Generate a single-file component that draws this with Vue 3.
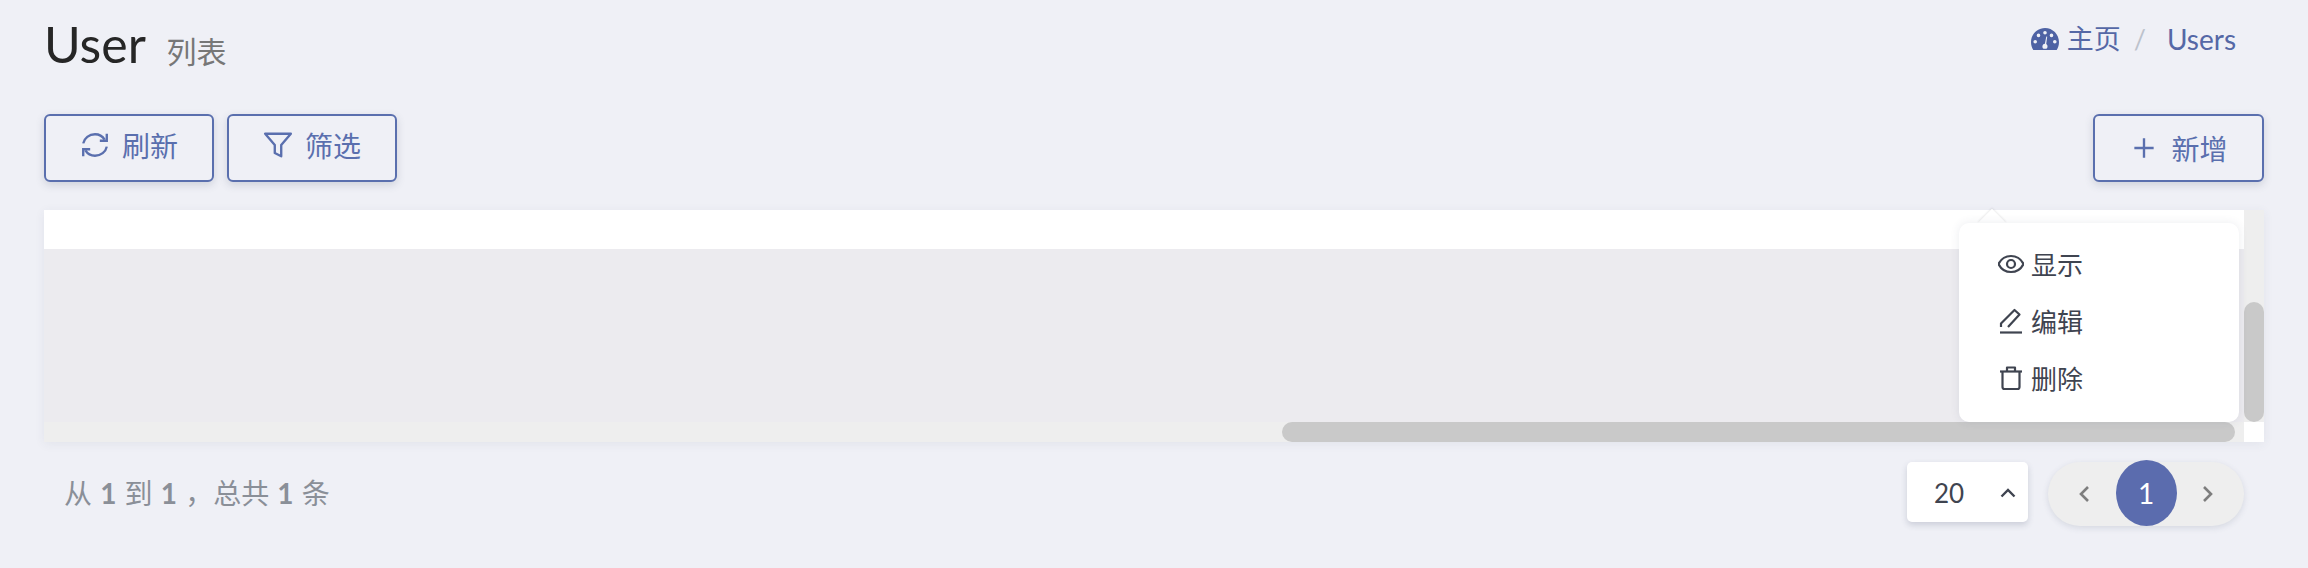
<script setup>
const actions = [
  { label: '显示', icon: 'eye' },
  { label: '编辑', icon: 'edit' },
  { label: '删除', icon: 'trash' }
]
</script>

<template>
  <div class="page">
    <header class="head">
      <h1 class="title">User <small>列表</small></h1>
      <nav class="crumbs">
        <svg class="gauge" viewBox="0 0 28 22" width="28" height="22">
          <path fill-rule="evenodd" d="M14 0C6.3 0 0 6.3 0 14c0 3 .8 5.700 2.300 8h23.400C27.200 19.700 28 17 28 14 28 6.300 21.700 0 14 0zM14 3a1.800 1.800 0 1 1 0 3.600A1.800 1.800 0 0 1 14 3zM7.500 5.600a1.800 1.800 0 1 1 0 3.600 1.800 1.800 0 0 1 0-3.600zM20.500 5.600a1.800 1.800 0 1 1 0 3.600 1.800 1.800 0 0 1 0-3.600zM4.200 12a1.800 1.800 0 1 1 0 3.600 1.800 1.800 0 0 1 0-3.600zM23.800 12a1.800 1.800 0 1 1 0 3.600 1.800 1.800 0 0 1 0-3.600zM15.300 8.500l.9.200-1 7.400c.8.500 1.300 1.300 1.300 2.300 0 1-.5 1.900-1.300 2.400h-2.500c-.8-.5-1.300-1.400-1.300-2.400 0-1.400 1.100-2.600 2.500-2.700z" />
        </svg>
        <span class="crumb-home">主页</span>
        <span class="crumb-sep">/</span>
        <span class="crumb-current">Users</span>
      </nav>
    </header>

    <div class="toolbar">
      <div class="toolbar-left">
        <button class="btn btn-raised">
          <svg viewBox="0 0 28 28" width="30" height="30" fill="none" stroke="currentColor" stroke-width="2.200">
            <path d="M3 12.500C4 7.500 8.500 4 14 4c4 0 7 1.800 9 5" />
            <path d="M25 3.500V10h-6.500" />
            <path d="M25 15.500C24 20.500 19.500 24 14 24c-4 0-7-1.800-9-5" />
            <path d="M3 24.500V18h6.500" />
          </svg>
          <span>刷新</span>
        </button>
        <button class="btn btn-raised">
          <svg viewBox="0 0 28 28" width="30" height="30" fill="none" stroke="currentColor" stroke-width="2.200" stroke-linejoin="round">
            <path d="M2 3.500h24L17 14v10.500l-6-3V14z" />
          </svg>
          <span>筛选</span>
        </button>
      </div>
      <button class="btn btn-add">
        <svg viewBox="0 0 28 28" width="30" height="30" fill="none" stroke="currentColor" stroke-width="2.200">
          <path d="M14 5v18M5 14h18" />
        </svg>
        <span>新增</span>
      </button>
    </div>

    <section class="grid">
      <div class="grid-view">
        <div class="grid-head"></div>
        <div class="grid-body"></div>
      </div>
      <div class="track-v"><div class="thumb-v"></div></div>
      <div class="track-h"><div class="thumb-h"></div></div>
      <div class="corner"></div>

      <div class="arrow"></div>
      <ul class="menu">
        <li v-for="a in actions" :key="a.label" class="menu-item">
          <svg viewBox="0 0 26 26" width="26" height="26" fill="none" stroke="currentColor" stroke-width="2.200" stroke-linejoin="round">
            <template v-if="a.icon === 'eye'">
              <path d="M.5 13C3 8 7.500 5 13 5s10 3 12.500 8C23 18 18.500 21 13 21S3 18 .5 13z" />
              <circle cx="13" cy="13" r="4" />
            </template>
            <template v-else-if="a.icon === 'edit'">
              <path d="M3 19v-3.500L16.500 2l5 4.500L10 19" />
              <path d="M2 24.500h22" />
            </template>
            <template v-else>
              <path d="M2 6.500h22" />
              <path d="M9 6.500V2.500h8v4" />
              <path d="M4.500 6.500V22a2 2 0 0 0 2 2h13a2 2 0 0 0 2-2V6.500" />
            </template>
          </svg>
          <span>{{ a.label }}</span>
        </li>
      </ul>
    </section>

    <footer class="foot">
      <div class="summary">从 <b>1</b> 到 <b>1</b> ，总共 <b>1</b> 条</div>
      <div class="paging">
        <div class="size">
          <span>20</span>
          <svg viewBox="0 0 16 10" width="16" height="10" fill="none" stroke="currentColor" stroke-width="2.400">
            <path d="M1.500 8.500L8 2l6.500 6.500" />
          </svg>
        </div>
        <div class="pager">
          <svg viewBox="0 0 12 18" width="12" height="18" fill="none" stroke="currentColor" stroke-width="2.600">
            <path d="M10 2L3 9l7 7" />
          </svg>
          <span class="page-on">1</span>
          <svg viewBox="0 0 12 18" width="12" height="18" fill="none" stroke="currentColor" stroke-width="2.600">
            <path d="M2 2l7 7-7 7" />
          </svg>
        </div>
      </div>
    </footer>
  </div>
</template>

<style>
html, body {
  margin: 0;
  background: #eff0f6;
}
</style>

<style scoped>
.page {
  width: 2308px;
  height: 568px;
  box-sizing: border-box;
  padding: 0 44px;
  overflow: hidden;
  background: #eff0f6;
  font-family: Lato, "Noto Sans CJK SC", sans-serif;
  color: #3c4250;
}

.head {
  display: flex;
  justify-content: space-between;
  align-items: flex-start;
  height: 114px;
}

.title {
  margin: 14px 0 0;
  font-size: 50px;
  line-height: 60px;
  font-weight: 400;
  color: #262626;
}

.title small {
  margin-left: 9px;
  font-size: 30px;
  color: #777;
}

.crumbs {
  display: flex;
  align-items: center;
  margin: 22px 28px 0 0;
  font-size: 27px;
  line-height: 34px;
  color: #5568a6;
}

.gauge {
  fill: #4e62a4;
  margin-right: 8px;
}

.crumb-sep {
  margin: 0 21px 0 13px;
  color: #bcc2cc;
}

.crumb-current {
  font-size: 28px;
}

.toolbar {
  display: flex;
  justify-content: space-between;
  height: 68px;
}

.toolbar-left {
  display: flex;
  gap: 13px;
}

.btn {
  display: flex;
  align-items: center;
  justify-content: center;
  gap: 12px;
  width: 170px;
  height: 68px;
  padding: 0;
  box-sizing: border-box;
  border: 2px solid #5a6fae;
  border-radius: 6px;
  background: #eff0f6;
  box-shadow: 0 3px 8px rgba(60, 70, 100, 0.18);
  font-family: inherit;
  font-size: 28px;
  color: #5a6fae;
}

.btn-raised {
  padding-bottom: 7px;
}

.btn-add {
  width: 171px;
}

.grid {
  position: relative;
  display: grid;
  grid-template-columns: 2200px 20px;
  grid-template-rows: 212px 20px;
  width: 2220px;
  margin-top: 28px;
  box-shadow: 0 2px 10px rgba(60, 70, 100, 0.07);
}

.grid-view {
  display: flex;
  flex-direction: column;
}

.grid-head {
  height: 39px;
  background: #fff;
}

.grid-body {
  flex: 1;
  background: #ecebef;
}

.track-v {
  display: flex;
  align-items: flex-end;
  background: #eee;
}

.thumb-v {
  width: 20px;
  height: 120px;
  border-radius: 10px;
  background: #c9c9c9;
}

.track-h {
  display: flex;
  justify-content: flex-end;
  background: #eee;
}

.thumb-h {
  width: 953px;
  height: 20px;
  margin-right: 9px;
  border-radius: 10px;
  background: #c9c9c9;
}

.corner {
  background: #fff;
}

.arrow {
  position: absolute;
  left: 1938px;
  top: 3px;
  width: 20px;
  height: 20px;
  background: #fff;
  transform: rotate(45deg);
  box-shadow: -1px -1px 2px rgba(0, 0, 0, 0.08);
}

.menu {
  position: absolute;
  left: 1915px;
  top: 13px;
  width: 280px;
  height: 199px;
  box-sizing: border-box;
  margin: 0;
  padding: 12px 0 0 39px;
  list-style: none;
  background: #fff;
  border-radius: 10px;
  box-shadow: 0 0 10px rgba(60, 70, 100, 0.1);
}

.menu-item {
  display: flex;
  align-items: center;
  gap: 7px;
  height: 57px;
  font-size: 26px;
  color: #3f4450;
}

.foot {
  display: flex;
  justify-content: space-between;
  align-items: flex-start;
  margin-top: 20px;
}

.summary {
  margin: 14px 0 0 20px;
  font-size: 28px;
  line-height: 34px;
  word-spacing: 1px;
  color: #8a8f98;
}

.paging {
  display: flex;
  gap: 20px;
  margin-right: 20px;
}

.size {
  display: flex;
  align-items: center;
  justify-content: space-between;
  width: 121px;
  height: 60px;
  box-sizing: border-box;
  padding: 2px 12px 0 27px;
  background: #fff;
  border-radius: 5px;
  box-shadow: 0 3px 6px rgba(60, 70, 100, 0.2);
  font-size: 26px;
  color: #3f4450;
}

.pager {
  display: flex;
  align-items: center;
  justify-content: space-between;
  width: 196px;
  height: 64px;
  box-sizing: border-box;
  padding: 0 30px;
  background: #eee;
  border-radius: 32px;
  box-shadow: 0 2px 6px rgba(60, 70, 100, 0.14);
  color: #7d7d7d;
}

.page-on {
  display: flex;
  align-items: center;
  justify-content: center;
  width: 61px;
  height: 66px;
  margin-top: -2px;
  border-radius: 50%;
  background: #5b6cae;
  color: #fff;
  font-size: 28px;
}
</style>
